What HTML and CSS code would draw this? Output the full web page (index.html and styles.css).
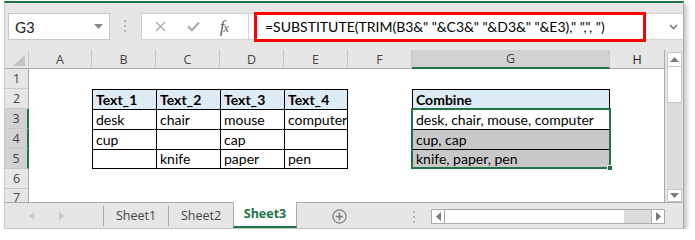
FILE: index.html
```html
<!DOCTYPE html>
<html>
<head>
<meta charset="utf-8">
<link rel="stylesheet" href="styles.css">
</head>
<body>
<div class="window">
  <div class="fbar">
    <div class="namebox"><span>G3</span><svg width="9" height="5" viewBox="0 0 9 5"><path d="M0 0h9L4.5 5z" fill="#8a8a8a"/></svg></div>
    <div class="grip"><svg width="3" height="13" viewBox="0 0 3 13"><rect x="0" y="0" width="2" height="2" fill="#b4b4b4"/><rect x="0" y="5" width="2" height="2" fill="#b4b4b4"/><rect x="0" y="10" width="2" height="2" fill="#b4b4b4"/></svg></div>
    <div class="fxbox">
      <svg class="ic-x" width="11" height="11" viewBox="0 0 11 11"><path d="M1 1L10 10M10 1L1 10" stroke="#a8a8a8" stroke-width="1.3" fill="none"/></svg>
      <svg class="ic-ok" width="13" height="11" viewBox="0 0 13 11"><path d="M1 5.5L4.8 9.3L12 1.5" stroke="#a8a8a8" stroke-width="2" fill="none"/></svg>
      <span class="fx">f<span class="fxx">x</span></span>
    </div>
    <div class="finput">
      <div class="hl">=SUBSTITUTE(TRIM(B3&amp;" "&amp;C3&amp;" "&amp;D3&amp;" "&amp;E3)," ",", ")</div>
      <svg class="chev" width="9" height="6" viewBox="0 0 9 6"><path d="M1 1L4.5 4.5L8 1" stroke="#7a7a7a" stroke-width="1.6" fill="none"/></svg>
    </div>
  </div>

  <div class="main">
    <div class="sheet">
      <div class="ch corner"><svg width="12" height="11" viewBox="0 0 12 11"><path d="M12 0V11H0z" fill="#c4c4c4"/></svg></div>
      <div class="ch">A</div><div class="ch">B</div><div class="ch">C</div><div class="ch">D</div><div class="ch">E</div><div class="ch">F</div><div class="ch sel">G</div><div class="ch hcol">H</div>

      <div class="rh">1</div><div class="c"></div><div class="c"></div><div class="c"></div><div class="c"></div><div class="c"></div><div class="c"></div><div class="c"></div><div class="c"></div>

      <div class="rh">2</div><div class="c"></div>
      <div class="c t hd">Text_1</div><div class="c t hd">Text_2</div><div class="c t hd">Text_3</div><div class="c t hd tr">Text_4</div>
      <div class="c"></div><div class="c t hd tr">Combine</div><div class="c"></div>

      <div class="rh sel">3</div><div class="c"></div>
      <div class="c t">desk</div><div class="c t">chair</div><div class="c t">mouse</div><div class="c t tr">computer</div>
      <div class="c"></div><div class="c t tr">desk, chair, mouse, computer</div><div class="c"></div>

      <div class="rh sel">4</div><div class="c"></div>
      <div class="c t">cup</div><div class="c t"></div><div class="c t">cap</div><div class="c t tr"></div>
      <div class="c"></div><div class="c t tr shade">cup, cap</div><div class="c"></div>

      <div class="rh sel">5</div><div class="c"></div>
      <div class="c t tb"></div><div class="c t tb">knife</div><div class="c t tb">paper</div><div class="c t tb tr">pen</div>
      <div class="c"></div><div class="c t tb tr shade">knife, paper, pen</div><div class="c"></div>

      <div class="rh">6</div><div class="c"></div><div class="c"></div><div class="c"></div><div class="c"></div><div class="c"></div><div class="c"></div><div class="c"></div><div class="c"></div>

      <div class="rh r7">7</div><div class="c"></div><div class="c"></div><div class="c"></div><div class="c"></div><div class="c"></div><div class="c"></div><div class="c"></div><div class="c"></div>

      <div class="selection"><span class="handle"></span></div>
    </div>
    <div class="vscroll">
      <div class="vbtn"><svg width="9" height="5" viewBox="0 0 9 5"><path d="M0 5h9L4.5 0z" fill="#7a7a7a"/></svg></div>
      <div class="vthumb"></div>
      <div class="vtrack"></div>
      <div class="vbtn down"><svg width="9" height="5" viewBox="0 0 9 5"><path d="M0 0h9L4.5 5z" fill="#7a7a7a"/></svg></div>
    </div>
  </div>

  <div class="tabs">
    <div class="nav">
      <svg width="5" height="8" viewBox="0 0 5 8"><path d="M5 0V8L0 4z" fill="#c8c8c8"/></svg>
      <svg class="navr" width="5" height="8" viewBox="0 0 5 8"><path d="M0 0V8L5 4z" fill="#c8c8c8"/></svg>
    </div>
    <span class="vsep"></span>
    <div class="tab">Sheet1</div>
    <span class="vsep"></span>
    <div class="tab">Sheet2</div>
    <div class="tab active">Sheet3</div>
    <div class="rest">
      <svg class="plus" width="15" height="15" viewBox="0 0 15 15"><circle cx="7.5" cy="7.5" r="6.6" stroke="#7a7a7a" stroke-width="1.2" fill="none"/><path d="M7.5 3.8V11.2M3.8 7.5H11.2" stroke="#7a7a7a" stroke-width="1.6"/></svg>
      <svg class="hgrip" width="2" height="12" viewBox="0 0 2 12"><rect x="0" y="0" width="2" height="2" fill="#b4b4b4"/><rect x="0" y="5" width="2" height="2" fill="#b4b4b4"/><rect x="0" y="10" width="2" height="2" fill="#b4b4b4"/></svg>
      <div class="hscroll">
        <div class="hbtn"><svg width="5" height="9" viewBox="0 0 5 9"><path d="M5 0V9L0 4.5z" fill="#7a7a7a"/></svg></div>
        <div class="hthumb"></div>
        <div class="htrack"></div>
        <div class="hbtn"><svg width="5" height="9" viewBox="0 0 5 9"><path d="M0 0V9L5 4.5z" fill="#7a7a7a"/></svg></div>
      </div>
    </div>
  </div>
</div>
</body>
</html>
```

FILE: styles.css
```css
* { box-sizing: border-box; }
body {
  margin: 0;
  background: #fff;
  font-family: "Open Sans", "Noto Sans", sans-serif;
}
.window {
  margin: 1px 0 0 4px;
  width: 680px;
  height: 228px;
  background: #e6e6e6;
  border-top: 2px solid #217346;
  border-left: 1px solid #c8c8c8;
  border-right: 1px solid #a8a8a8;
  border-bottom: 1px solid #c4c4c4;
  box-shadow: 3px 3px 4px rgba(0, 0, 0, 0.22);
  display: flex;
  flex-direction: column;
  overflow: hidden;
}

/* formula bar */
.fbar {
  height: 47px;
  flex: none;
  display: flex;
  align-items: flex-start;
  padding: 10px 0 0 3px;
}
.namebox {
  width: 102px;
  height: 27px;
  background: #fff;
  border: 1px solid #c8c8c8;
  display: flex;
  align-items: center;
  justify-content: space-between;
  padding: 0 6px 0 6px;
  font-family: Lato, sans-serif;
  font-size: 15px;
  color: #222;
}
.grip {
  width: 31px;
  height: 27px;
  display: flex;
  justify-content: center;
  align-items: center;
}
.fxbox {
  width: 108px;
  height: 27px;
  background: #fff;
  border: 1px solid #d2d2d2;
  display: flex;
  align-items: center;
}
.ic-x { margin-left: 13px; }
.ic-ok { margin-left: 21px; }
.fx {
  margin-left: 20px;
  font-family: "Liberation Serif", serif;
  font-style: italic;
  font-size: 16px;
  color: #555;
  letter-spacing: -1px;
}
.fxx { font-size: 12px; }
.finput {
  flex: 1;
  height: 27px;
  background: #fff;
  border: 1px solid #d2d2d2;
  border-left: none;
  border-right: none;
  display: flex;
  align-items: center;
  padding-left: 5px;
  padding-right: 5px;
}
.hl {
  width: 392px;
  height: 30px;
  margin: -1px 0;
  border: 3px solid #ff0000;
  display: flex;
  align-items: center;
  padding-left: 8px;
  font-family: Lato, sans-serif;
  font-size: 14px;
  color: #000;
  white-space: nowrap;
}
.chev { margin-left: auto; }

/* sheet */
.main {
  height: 152px;
  flex: none;
  display: flex;
}
.sheet {
  position: relative;
  width: 660px;
  display: grid;
  grid-template-columns: 24px 63px repeat(5, 64px) 198px 54px;
  grid-template-rows: 19px repeat(6, 20px) 13px;
  background: #fff;
  border-right: 1px solid #a8a8a8;
  overflow: hidden;
}
.ch {
  background: #e6e6e6;
  border-right: 1px solid #c8c8c8;
  border-bottom: 1px solid #ababab;
  display: flex;
  align-items: center;
  justify-content: center;
  font-size: 12.5px;
  color: #444;
}
.ch.corner {
  justify-content: flex-end;
  align-items: flex-end;
  padding: 0 3px 2px 0;
}
.ch.sel {
  background: #d2d2d2;
  border-bottom: 2px solid #217346;
}
.ch.hcol { border-right: none; color: #222; }
.rh {
  background: #e6e6e6;
  border-right: 1px solid #ababab;
  border-bottom: 1px solid #c8c8c8;
  display: flex;
  align-items: center;
  justify-content: center;
  font-size: 12.5px;
  color: #444;
}
.rh.sel {
  background: #d2d2d2;
  border-right: 2px solid #217346;
}
.rh.r7 { align-items: flex-start; overflow: hidden; border-bottom: none; line-height: 18px; }
.c {
  font-family: Lato, sans-serif;
  font-size: 14px;
  color: #000;
  padding: 0 2px 1px 3px;
  display: flex;
  align-items: flex-end;
  white-space: nowrap;
  line-height: 17px;
}
.t {
  border-left: 1px solid #000;
  border-top: 1px solid #000;
}
.tr { border-right: 1px solid #000; }
.tb { border-bottom: 1px solid #000; }
.hd {
  background: #ddebf7;
  font-weight: bold;
}
.shade { background: #c8c8c8; }
.selection {
  position: absolute;
  grid-column: 8 / 9;
  grid-row: 4 / 7;
  top: -1px;
  left: -1px;
  right: -1px;
  bottom: 0;
  border: 2px solid #217346;
  z-index: 2;
  pointer-events: none;
}
.handle {
  position: absolute;
  right: -4px;
  bottom: -4px;
  width: 6px;
  height: 6px;
  background: #217346;
  border: 1px solid #fff;
}

/* vertical scrollbar */
.vscroll {
  width: 18px;
  display: flex;
  flex-direction: column;
  align-items: center;
  padding: 2px 0 0 1px;
}
.vbtn {
  width: 15px;
  height: 15px;
  flex: none;
  background: #fff;
  border: 1px solid #c6c6c6;
  display: flex;
  align-items: center;
  justify-content: center;
}
.vbtn.down { height: 13px; }
.vthumb {
  width: 15px;
  height: 36px;
  flex: none;
  background: #fff;
  border: 1px solid #c6c6c6;
  border-top: none;
}
.vtrack {
  width: 15px;
  flex: 1;
  background: #dcdcdc;
}

/* sheet tabs */
.tabs {
  height: 26px;
  flex: none;
  display: flex;
  align-items: stretch;
  border-top: 1px solid #ababab;
}
.nav {
  width: 98px;
  display: flex;
  align-items: center;
  padding-left: 24px;
}
.navr { margin-left: 25px; }
.vsep {
  width: 1px;
  height: 20px;
  margin-top: 3px;
  background: #a6a6a6;
}
.tab {
  width: 64px;
  display: flex;
  align-items: center;
  justify-content: center;
  font-size: 12.5px;
  color: #444;
  padding-bottom: 1px;
}
.tab.active {
  margin-top: -1px;
  background: #fff;
  border-left: 1px solid #ababab;
  border-right: 1px solid #ababab;
  border-bottom: 2px solid #217346;
  color: #217346;
  font-weight: bold;
  width: 64px;
}
.rest {
  flex: 1;
  display: flex;
  align-items: center;
}
.plus { margin-left: 35px; margin-top: 2px; }
.hgrip { margin-left: 66px; margin-top: 2px; }
.hscroll {
  margin-left: 16px;
  margin-top: 2px;
  display: flex;
  height: 15px;
}
.hbtn {
  width: 14px;
  height: 15px;
  background: #fff;
  border: 1px solid #ababab;
  display: flex;
  align-items: center;
  justify-content: center;
}
.hthumb {
  width: 179px;
  background: #fff;
  border-top: 1px solid #ababab;
  border-bottom: 1px solid #ababab;
}
.htrack {
  width: 27px;
  background: #dcdcdc;
  border-top: 1px solid #ababab;
  border-bottom: 1px solid #ababab;
}
```
